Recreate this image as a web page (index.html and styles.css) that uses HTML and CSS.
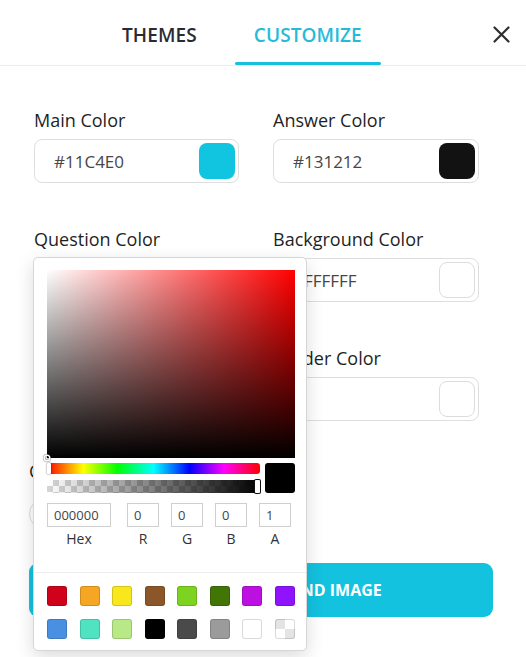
FILE: index.html
```html
<!DOCTYPE html>
<html lang="en">
<head>
<meta charset="utf-8">
<title>Customize</title>
<link rel="stylesheet" href="styles.css">
</head>
<body>
<div class="app">
  <header class="header">
    <nav class="tabs">
      <div class="tab">THEMES</div>
      <div class="tab active">CUSTOMIZE</div>
    </nav>
    <button class="close" aria-label="Close">
      <svg width="17" height="17" viewBox="0 0 17 17"><path d="M1.5 1.5 L15.5 15.5 M15.5 1.5 L1.5 15.5" stroke="#2f2f2f" stroke-width="2.2" stroke-linecap="round" fill="none"/></svg>
    </button>
  </header>

  <main class="content">
    <div class="grid">
      <div class="field">
        <label class="label">Main Color</label>
        <div class="input"><span>#11C4E0</span><span class="swatch sw-main"></span></div>
      </div>
      <div class="field">
        <label class="label">Answer Color</label>
        <div class="input"><span>#131212</span><span class="swatch sw-answer"></span></div>
      </div>
      <div class="field">
        <label class="label">Question Color</label>
        <div class="input"><span>#000000</span><span class="swatch sw-black"></span></div>
      </div>
      <div class="field">
        <label class="label">Background Color</label>
        <div class="input"><span>#FFFFFF</span><span class="swatch sw-white"></span></div>
      </div>
      <div class="field">
        <label class="label">Text Color</label>
        <div class="input"><span></span><span class="swatch sw-white"></span></div>
      </div>
      <div class="field">
        <label class="label">Border Color</label>
        <div class="input"><span></span><span class="swatch sw-white"></span></div>
      </div>
    </div>

    <section class="extra">
      <div class="label">Corner Style</div>
      <div class="options">
        <span class="opt"></span>
        <span class="opt"></span>
        <span class="opt"></span>
      </div>
    </section>

    <button class="upload">UPLOAD BACKGROUND IMAGE</button>
  </main>

  <div class="picker">
    <div class="saturation"><span class="sat-pointer"></span></div>
    <div class="controls">
      <div class="sliders">
        <div class="hue"><span class="hue-pointer"></span></div>
        <div class="alpha"><span class="alpha-pointer"></span></div>
      </div>
      <div class="preview"></div>
    </div>
    <div class="fields">
      <div class="pf pf-hex"><div class="pf-input">000000</div><div class="pf-label">Hex</div></div>
      <div class="pf pf-r"><div class="pf-input">0</div><div class="pf-label">R</div></div>
      <div class="pf"><div class="pf-input">0</div><div class="pf-label">G</div></div>
      <div class="pf"><div class="pf-input">0</div><div class="pf-label">B</div></div>
      <div class="pf"><div class="pf-input">1</div><div class="pf-label">A</div></div>
    </div>
    <div class="presets">
      <span class="ps" style="background:#D0021B"></span>
      <span class="ps" style="background:#F5A623"></span>
      <span class="ps" style="background:#F8E71C"></span>
      <span class="ps" style="background:#8B572A"></span>
      <span class="ps" style="background:#7ED321"></span>
      <span class="ps" style="background:#417505"></span>
      <span class="ps" style="background:#BD10E0"></span>
      <span class="ps" style="background:#9013FE"></span>
      <span class="ps" style="background:#4A90E2"></span>
      <span class="ps" style="background:#50E3C2"></span>
      <span class="ps" style="background:#B8E986"></span>
      <span class="ps" style="background:#000000"></span>
      <span class="ps" style="background:#4A4A4A"></span>
      <span class="ps" style="background:#9B9B9B"></span>
      <span class="ps" style="background:#FFFFFF"></span>
      <span class="ps ps-transparent"></span>
    </div>
  </div>
</div>
</body>
</html>
```
FILE: styles.css
```css
* { box-sizing: border-box; }

html, body {
  margin: 0;
  padding: 0;
  background: #fff;
}

body {
  font-family: "Open Sans", "Liberation Sans", sans-serif;
  color: #222;
}

.app {
  position: relative;
  width: 526px;
  min-height: 657px;
}

/* Header */
.header {
  display: flex;
  height: 66px;
  border-bottom: 1px solid #ececec;
}

.tabs {
  display: flex;
  gap: 19px;
  padding-left: 103px;
}

.tab {
  position: relative;
  height: 65px;
  padding: 8px 19px 3px;
  display: flex;
  align-items: center;
  font-size: 19px;
  font-weight: 600;
  color: #2a2a33;
  letter-spacing: 0.1px;
}

.tab.active {
  color: #25bbd8;
}

.tab.active::after {
  content: "";
  position: absolute;
  left: 0;
  right: 0;
  bottom: 0;
  height: 3px;
  border-radius: 2px;
  background: #17c0dd;
}

.close {
  margin-left: auto;
  margin-right: 16px;
  margin-top: 26px;
  align-self: flex-start;
  width: 17px;
  height: 17px;
  padding: 0;
  border: 0;
  background: none;
  line-height: 0;
}

/* Form grid */
.grid {
  display: grid;
  grid-template-columns: 205px 206px;
  column-gap: 34px;
  row-gap: 44px;
  padding: 42px 0 0 34px;
}

.label {
  display: block;
  font-size: 18px;
  line-height: 24px;
  color: #1f1f1f;
  margin-bottom: 7px;
}

.input {
  height: 44px;
  border: 1px solid #dedede;
  border-radius: 8px;
  display: flex;
  align-items: center;
  justify-content: space-between;
  padding: 0 3px 0 19px;
  font-size: 17px;
  color: #474747;
}

.swatch {
  width: 36px;
  height: 36px;
  border-radius: 8px;
}

.sw-main { background: #11C4E0; }
.sw-answer { background: #131212; }
.sw-black { background: #000; }
.sw-white { background: #fff; border: 1px solid #dcdcdc; }

/* Extra row */
.extra {
  padding: 38px 0 0 29px;
}

.extra .label {
  margin-bottom: 15px;
}

.options {
  display: flex;
  gap: 12px;
}

.opt {
  width: 32px;
  height: 32px;
  border-radius: 50%;
  border: 1px solid #dcdcdc;
}

.upload {
  display: block;
  width: 464px;
  height: 54px;
  margin: 33px 0 0 29px;
  border: 0;
  border-radius: 9px;
  background: #13C2DF;
  color: #fff;
  font-family: "Open Sans", "Liberation Sans", sans-serif;
  font-size: 16px;
  font-weight: 700;
}

/* Color picker popover */
.picker {
  position: absolute;
  left: 33px;
  top: 257px;
  width: 274px;
  background: #fff;
  border: 1px solid #d6d6d6;
  border-radius: 5px;
  padding: 12px 11px 11px 13px;
  box-shadow: 0 6px 18px rgba(0, 0, 0, 0.14);
}

.saturation {
  position: relative;
  height: 188px;
  background:
    linear-gradient(to top, #000, rgba(0, 0, 0, 0)),
    linear-gradient(to right, #fff, rgba(255, 255, 255, 0)),
    #f00;
}

.sat-pointer {
  position: absolute;
  left: -2px;
  bottom: -2px;
  width: 4px;
  height: 4px;
  border-radius: 50%;
  box-shadow: 0 0 0 1.5px #fff, inset 0 0 1px 1px rgba(0, 0, 0, 0.3), 0 0 1px 2px rgba(0, 0, 0, 0.4);
}

.controls {
  display: flex;
  gap: 5px;
  margin-top: 5px;
}

.sliders {
  flex: 1;
}

.hue {
  position: relative;
  height: 11px;
  border-radius: 3px;
  background: linear-gradient(to right, #f00 0%, #ff0 17%, #0f0 33%, #0ff 50%, #00f 67%, #f0f 83%, #f00 100%);
}

.hue-pointer {
  position: absolute;
  left: 0;
  top: 0;
  width: 4px;
  height: 11px;
  border-radius: 1px;
  background: #fff;
  box-shadow: 0 0 2px rgba(0, 0, 0, 0.6);
}

.alpha {
  position: relative;
  height: 13px;
  margin-top: 6px;
  border-radius: 2px;
  background:
    linear-gradient(to right, rgba(0, 0, 0, 0), #000),
    repeating-conic-gradient(#d6d6d6 0 25%, #fff 0 50%) 0 0 / 12px 12px;
}

.alpha-pointer {
  position: absolute;
  right: 0;
  top: 0;
  width: 5px;
  height: 13px;
  border-radius: 1px;
  background: #fff;
  box-shadow: 0 0 0 1px #111;
}

.preview {
  width: 30px;
  height: 30px;
  border-radius: 3px;
  background: #000;
}

.fields {
  display: flex;
  margin-top: 10px;
}

.pf {
  width: 32px;
  margin-left: 12px;
  display: flex;
  flex-direction: column;
}

.pf-hex {
  width: 64px;
  margin-left: 0;
}

.pf-r {
  margin-left: 16px;
}

.pf-input {
  height: 24px;
  border: 1px solid #cfcfcf;
  padding-left: 6px;
  font-size: 13px;
  line-height: 22px;
  color: #444;
}

.pf-label {
  margin-top: 4px;
  font-size: 14px;
  line-height: 16px;
  text-align: center;
  color: #333;
}

.presets {
  margin: 25px -11px 0 -13px;
  padding: 13px 11px 0 13px;
  border-top: 1px solid #eee;
  display: grid;
  grid-template-columns: repeat(8, 20px);
  justify-content: space-between;
  row-gap: 13px;
}

.ps {
  width: 20px;
  height: 20px;
  border-radius: 3px;
  box-shadow: inset 0 0 0 1px rgba(0, 0, 0, 0.15);
}

.ps-transparent {
  background: conic-gradient(#fff 0 25%, #e4e4e4 0 50%, #fff 0 75%, #e4e4e4 0) !important;
}
```
